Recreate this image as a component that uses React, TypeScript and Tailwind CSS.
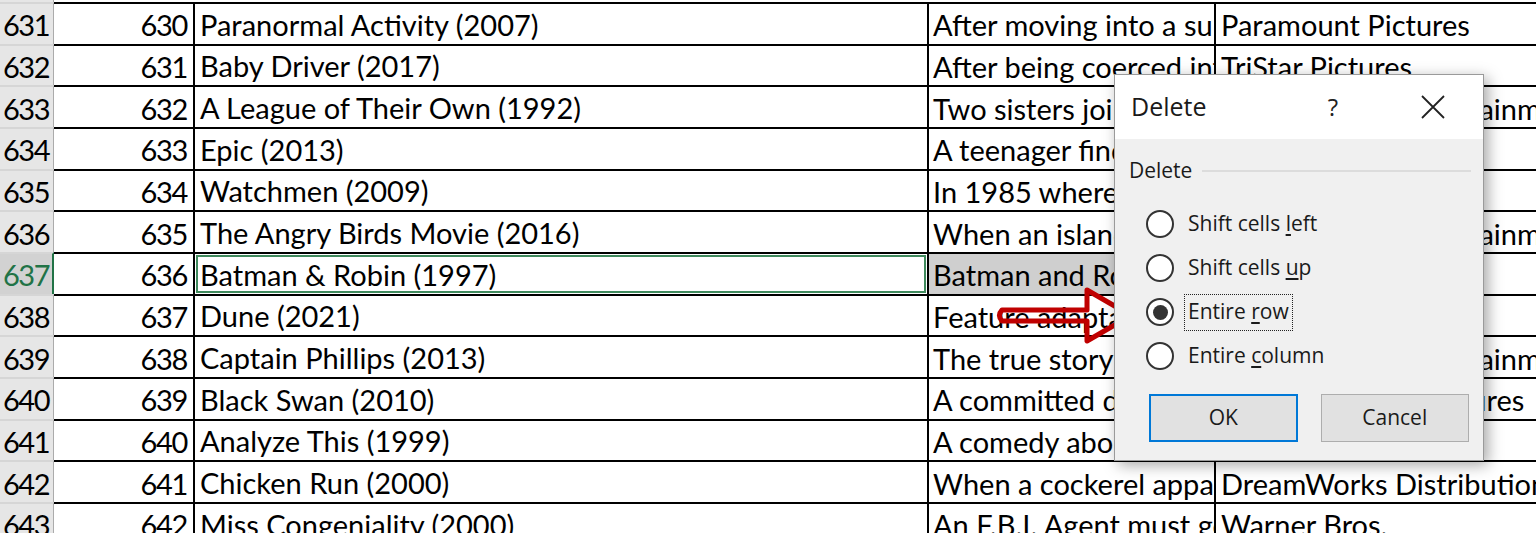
import React from "react";

const rows: [string, string, string, string, string][] = [
  ["631", "630", "Paranormal Activity (2007)", "After moving into a suburban home", "Paramount Pictures"],
  ["632", "631", "Baby Driver (2017)", "After being coerced into working", "TriStar Pictures"],
  ["633", "632", "A League of Their Own (1992)", "Two sisters join the first female", "Sony Pictures Entertainment"],
  ["634", "633", "Epic (2013)", "A teenager finds herself", "20th Century Fox"],
  ["635", "634", "Watchmen (2009)", "In 1985 where former superheroes", ""],
  ["636", "635", "The Angry Birds Movie (2016)", "When an island populated", "Sony Pictures Entertainment"],
  ["637", "636", "Batman & Robin (1997)", "Batman and Robin try to defeat", ""],
  ["638", "637", "Dune (2021)", "Feature adaptation of", ""],
  ["639", "638", "Captain Phillips (2013)", "The true story of", "Sony Pictures Entertainment"],
  ["640", "639", "Black Swan (2010)", "A committed dancer", "Fox Searchlight Pictures"],
  ["641", "640", "Analyze This (1999)", "A comedy about", ""],
  ["642", "641", "Chicken Run (2000)", "When a cockerel apparently flies", "DreamWorks Distribution"],
  ["643", "642", "Miss Congeniality (2000)", "An F.B.I. Agent must go undercover", "Warner Bros."],
];

function Radio({ checked }: { checked?: boolean }) {
  return (
    <div className="w-[28px] h-[28px] rounded-full border-2 border-[#333333] bg-white flex items-center justify-center shrink-0">
      {checked && <div className="w-[15px] h-[15px] rounded-full bg-[#333333]" />}
    </div>
  );
}

function Option({ children, checked, focus }: { children: React.ReactNode; checked?: boolean; focus?: boolean }) {
  return (
    <div className="h-[44px] flex items-center">
      <Radio checked={checked} />
      <div
        className={
          "ml-[10px] h-[37px] flex items-center px-[3px] border " +
          (focus ? "border-dotted border-[#222222]" : "border-transparent")
        }
      >
        <span className="whitespace-pre">{children}</span>
      </div>
    </div>
  );
}

export default function App() {
  return (
    <div
      className="relative w-[1536px] h-[533px] overflow-hidden bg-white text-black"
      style={{ fontFamily: "Lato, 'Open Sans', sans-serif" }}
    >
      <div className="flex flex-col text-[29px]">
        <div className="h-[2px] flex">
          <div className="w-[54px] bg-[#e6e6e6] border-r border-[#ababab]" />
        </div>
        {rows.map((r) => {
          const sel = r[0] === "637";
          return (
            <div key={r[0]} className="flex h-[41.67px] shrink-0">
              <div
                className={
                  "w-[54px] shrink-0 border-t-2 border-t-[#d6d6d6] pl-[3px] flex items-center pt-[2px] leading-none tracking-[-1.5px] " +
                  (sel
                    ? "bg-[#d2d2d2] text-[#217346] border-r-2 border-r-[#217346]"
                    : "bg-[#e6e6e6] border-r border-r-[#ababab]")
                }
              >
                {r[0]}
              </div>
              <div className="w-[141px] shrink-0 border-t-2 border-r-2 border-black flex items-center justify-end pr-[6px] pt-[2px] leading-none tracking-[-1.3px]">
                {r[1]}
              </div>
              <div className="w-[734px] shrink-0 border-t-2 border-r-2 border-black flex pt-[1px] pb-[1px] px-[1px]">
                <div
                  className={
                    "flex-1 flex items-center pl-[2px] pt-[1px] leading-none whitespace-nowrap overflow-hidden border-2 " +
                    (sel ? "border-[#3f8a5d]" : "border-transparent")
                  }
                >
                  {r[2]}
                </div>
              </div>
              <div
                className={
                  "w-[287px] shrink-0 border-t-2 border-r-2 border-black flex items-center pl-[4px] pt-[2px] leading-none whitespace-nowrap overflow-hidden " +
                  (sel ? "bg-[#cfcfcf]" : "")
                }
              >
                {r[3]}
              </div>
              <div className="flex-1 min-w-0 border-t-2 border-black flex items-center pl-[5px] pt-[2px] leading-none whitespace-nowrap overflow-hidden">
                {r[4]}
              </div>
            </div>
          );
        })}
      </div>

      {/* red arrow */}
      <svg className="absolute left-0 top-0 pointer-events-none" width="1536" height="533">
        <path
          d="M1002 310 L1087 310 L1087 290 L1131 315.5 L1087 341 L1087 321 L1002 321 Q997 315.5 1002 310 Z"
          fill="none"
          stroke="#c00000"
          strokeWidth="5"
          strokeLinejoin="round"
        />
      </svg>

      {/* dialog */}
      <div
        className="absolute left-[1114px] top-[74px] w-[370px] h-[387px] border border-[#9a9a9a] bg-[#f0f0f0] shadow-[4px_4px_14px_rgba(0,0,0,0.35)] flex flex-col text-[#1a1a1a]"
        style={{ fontFamily: "'Open Sans', 'Noto Sans', sans-serif" }}
      >
        <div className="h-[64px] bg-white flex items-center pl-[16px] pr-[38px] shrink-0">
          <span className="text-[25px] text-[#1a1a1a]">Delete</span>
          <span className="ml-auto text-[24px] text-[#222222] mr-[83px]">?</span>
          <svg width="24" height="24" viewBox="0 0 24 24">
            <path d="M1 1 L23 23 M23 1 L1 23" stroke="#222222" strokeWidth="1.8" fill="none" />
          </svg>
        </div>
        <div className="flex-1 flex flex-col pt-[18px] px-[14px] text-[21px]">
          <div className="h-[28px] flex items-center">
            <span>Delete</span>
            <div className="flex-1 h-[2px] bg-[#dcdcdc] ml-[10px] mr-[-2px]" />
          </div>
          <div className="mt-[17px] pl-[17px] flex flex-col">
            <Option>
              Shift cells <span className="underline underline-offset-3">l</span>eft
            </Option>
            <Option>
              Shift cells <span className="underline underline-offset-3">u</span>p
            </Option>
            <Option checked focus>
              Entire <span className="underline underline-offset-3">r</span>ow
            </Option>
            <Option>
              Entire <span className="underline underline-offset-3">c</span>olumn
            </Option>
          </div>
          <div className="mt-[16px] flex pl-[20px] gap-[23px]">
            <div className="w-[149px] h-[48px] bg-[#e1e1e1] border-2 border-[#0078d7] flex items-center justify-center">
              OK
            </div>
            <div className="w-[149px] h-[48px] bg-[#e1e1e1] border border-[#adadad] flex items-center justify-center">
              Cancel
            </div>
          </div>
        </div>
      </div>
    </div>
  );
}
